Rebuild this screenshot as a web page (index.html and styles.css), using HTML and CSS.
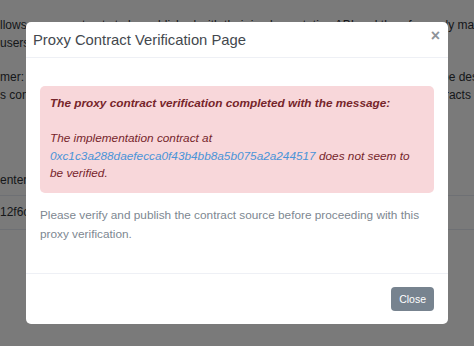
FILE: index.html
```html
<!DOCTYPE html>
<html lang="en">
<head>
<meta charset="utf-8">
<title>Proxy Contract Verification</title>
<link rel="stylesheet" href="styles.css">
</head>
<body>
<div class="page">
  <p class="intro">llows proxy contracts to be published with their implementation ABI and therefore only make<br>users read and write</p>
  <p class="intro">mer: This tool checks for the standard proxy storage slots as the implementation to be described<br>s contracts must be verified before linking their implementation and other proxy contracts on</p>
  <div class="row row-first">enter the proxy contract address</div>
  <div class="row">12f6c0a4b3e9d2c1f8a7b6e5d4c3b2a1</div>
</div>

<div class="backdrop"></div>

<div class="modal">
  <div class="modal-header">
    <h5 class="modal-title">Proxy Contract Verification Page</h5>
    <button class="close" type="button">×</button>
  </div>
  <div class="modal-body">
    <div class="alert">
      <b>The proxy contract verification completed with the message:</b><br><br>The implementation contract at <a class="addr" href="#">0xc1c3a288daefecca0f43b4bb8a5b075a2a244517</a> does not seem to be verified.
    </div>
    <p class="note">Please verify and publish the contract source before proceeding with this proxy verification.</p>
  </div>
  <div class="modal-footer">
    <button class="btn" type="button">Close</button>
  </div>
</div>
</body>
</html>
```

FILE: styles.css
```css
html, body {
  margin: 0;
  padding: 0;
  width: 474px;
  height: 346px;
  overflow: hidden;
  background: #ffffff;
  font-family: "Liberation Sans", Arial, sans-serif;
}

.page {
  width: 474px;
  overflow: hidden;
  padding-top: 16px;
  font-size: 12px;
  line-height: 18px;
  color: #2f3338;
  white-space: nowrap;
}

.intro {
  margin: 0 0 16px 0;
}

.row {
  padding: 0 0 6px 0;
  border-bottom: 1px solid #e7eaf3;
}

.row-first {
  margin-top: 67px;
}

.row + .row {
  padding: 7px 0 8px 0;
}

.backdrop {
  position: fixed;
  inset: 0;
  background: rgba(0, 0, 0, 0.52);
}

.modal {
  position: fixed;
  top: 22px;
  left: 26px;
  width: 422px;
  background: #ffffff;
  border-radius: 5px;
  display: flex;
  flex-direction: column;
}

.modal-header {
  display: flex;
  justify-content: space-between;
  align-items: flex-start;
  padding: 7px 8px 6px 7px;
  border-bottom: 1px solid #eef0f5;
}

.modal-title {
  margin: 0;
  font-size: 14.8px;
  line-height: 22px;
  font-weight: 400;
  color: #43484e;
}

.close {
  border: 0;
  background: transparent;
  padding: 0;
  margin: 0;
  font-family: "Liberation Sans", Arial, sans-serif;
  font-size: 16px;
  line-height: 14px;
  font-weight: 700;
  color: #8e9399;
  cursor: pointer;
}

.modal-body {
  padding: 14px;
}

.alert {
  margin: 14px 0 13px 0;
  padding: 9px 10px 10px 10px;
  background: #f8d7da;
  border-radius: 5px;
  color: #76252b;
  font-size: 11.8px;
  line-height: 17.6px;
  font-style: italic;
}

.alert b {
  font-weight: 700;
}

.addr {
  color: #4a94d8;
  text-decoration: none;
}

.note {
  margin: 0 0 14px 0;
  font-size: 11.8px;
  line-height: 19.3px;
  color: #7d8791;
}

.modal-footer {
  display: flex;
  justify-content: flex-end;
  padding: 13px 14px 13px 14px;
  border-top: 1px solid #eef0f5;
}

.btn {
  height: 24px;
  padding: 0 8px;
  border: 0;
  border-radius: 4px;
  background: #77838f;
  color: #ffffff;
  font-family: "Liberation Sans", Arial, sans-serif;
  font-size: 10.5px;
  cursor: pointer;
}
```
